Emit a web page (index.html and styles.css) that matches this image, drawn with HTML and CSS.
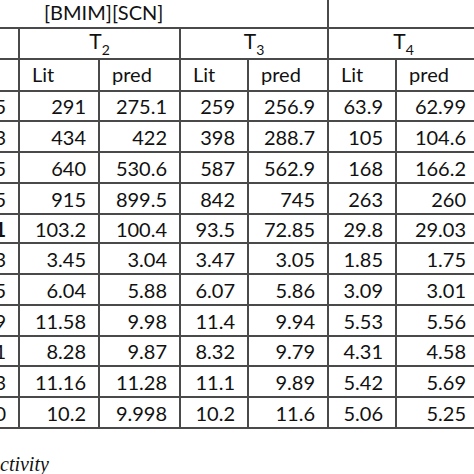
FILE: index.html
```html
<!DOCTYPE html>
<html>
<head>
<meta charset="utf-8">
<link rel="stylesheet" href="styles.css">
</head>
<body>
<div class="frame">
  <table class="data">
    <colgroup>
      <col class="c0"><col class="c1"><col class="c2"><col class="c3"><col class="c4"><col class="c5"><col class="c6">
    </colgroup>
    <tr class="r-top">
      <td colspan="5" class="title">[BMIM][SCN]</td>
      <td colspan="2"></td>
    </tr>
    <tr class="r-t">
      <td></td>
      <td colspan="2" class="th">T<sub>2</sub></td>
      <td colspan="2" class="th">T<sub>3</sub></td>
      <td colspan="2" class="th">T<sub>4</sub></td>
    </tr>
    <tr class="r-sub">
      <td></td>
      <td class="sh">Lit</td><td class="sh">pred</td>
      <td class="sh">Lit</td><td class="sh">pred</td>
      <td class="sh">Lit</td><td class="sh">pred</td>
    </tr>
    <tr class="h30"><td>5</td><td>291</td><td>275.1</td><td>259</td><td>256.9</td><td>63.9</td><td>62.99</td></tr>
    <tr class="h31"><td>3</td><td>434</td><td>422</td><td>398</td><td>288.7</td><td>105</td><td>104.6</td></tr>
    <tr class="h31"><td>5</td><td>640</td><td>530.6</td><td>587</td><td>562.9</td><td>168</td><td>166.2</td></tr>
    <tr class="h31"><td>5</td><td>915</td><td>899.5</td><td>842</td><td>745</td><td>263</td><td>260</td></tr>
    <tr class="h29"><td class="b">1</td><td>103.2</td><td>100.4</td><td>93.5</td><td>72.85</td><td>29.8</td><td>29.03</td></tr>
    <tr class="h31"><td>3</td><td>3.45</td><td>3.04</td><td>3.47</td><td>3.05</td><td>1.85</td><td>1.75</td></tr>
    <tr class="h31"><td>5</td><td>6.04</td><td>5.88</td><td>6.07</td><td>5.86</td><td>3.09</td><td>3.01</td></tr>
    <tr class="h31"><td>9</td><td>11.58</td><td>9.98</td><td>11.4</td><td>9.94</td><td>5.53</td><td>5.56</td></tr>
    <tr class="h30"><td>1</td><td>8.28</td><td>9.87</td><td>8.32</td><td>9.79</td><td>4.31</td><td>4.58</td></tr>
    <tr class="h31"><td>3</td><td>11.16</td><td>11.28</td><td>11.1</td><td>9.89</td><td>5.42</td><td>5.69</td></tr>
    <tr class="h31"><td>0</td><td>10.2</td><td>9.998</td><td>10.2</td><td>11.6</td><td>5.06</td><td>5.25</td></tr>
  </table>
  <p class="caption">activity</p>
</div>
</body>
</html>
```

FILE: styles.css
```css
html, body {
  margin: 0;
  padding: 0;
  background: #ffffff;
}
.frame {
  width: 474px;
  height: 474px;
  overflow: hidden;
}
.data {
  border-collapse: collapse;
  table-layout: fixed;
  width: 500px;
  margin-left: -22px;
  font-family: Lato, "Open Sans", sans-serif;
  font-size: 20px;
  color: #111111;
}
.c0 { width: 40px; }
.c1 { width: 80px; }
.c2 { width: 81px; }
.c3 { width: 68px; }
.c4 { width: 80px; }
.c5 { width: 68px; }
.c6 { width: 83px; }
.data td {
  border: 2px solid #4a4a4a;
  padding: 0 12px 0 0;
  text-align: right;
  white-space: nowrap;
  overflow: visible;
  line-height: 20px;
}
.data td.b { font-weight: 700; }
.r-top td {
  border-top: none;
  border-left: none;
  height: 24px;
}
.r-top td.title {
  text-align: left;
  padding: 0 0 3px 65px;
  vertical-align: middle;
}
.r-top td:first-child { border-right: 2px solid #4a4a4a; }
.r-t { height: 31px; }
.r-sub { height: 32px; }
.h29 { height: 29px; }
.h30 { height: 30px; }
.h31 { height: 31px; }
.data td.th {
  text-align: center;
  font-size: 21px;
  padding: 0 0 5px 0;
}
.th sub {
  font-size: 14px;
  line-height: 0;
  vertical-align: -6px;
}
.data td.sh {
  text-align: left;
  padding: 0 0 2px 12px;
}
.caption {
  margin: 23px 0 0 -10px;
  font-family: "Liberation Serif", "Times New Roman", serif;
  font-style: italic;
  font-size: 20px;
  line-height: 24px;
  color: #111111;
}
```
